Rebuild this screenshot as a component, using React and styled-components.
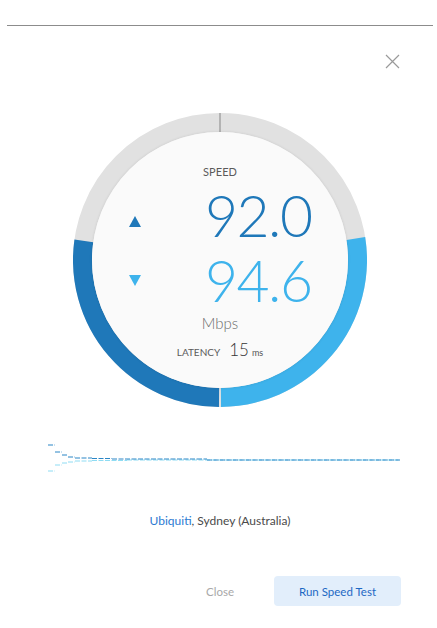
import React from 'react'
import styled, { createGlobalStyle } from 'styled-components'

const GlobalStyle = createGlobalStyle`
  html, body { margin: 0; padding: 0; background: #fff; }
  body { font-family: Lato, "Open Sans", sans-serif; }
`

const Modal = styled.div`
  margin: 25px 0 0 7px;
  width: 426px;
  border-top: 1px solid #8c8c8c;
  display: flex;
  flex-direction: column;
`

const Header = styled.div`
  display: flex;
  justify-content: flex-end;
  padding: 28px 33px 0 0;
`

const CloseIcon = styled.button`
  width: 15px;
  height: 15px;
  padding: 0;
  border: 0;
  background: none;
  cursor: pointer;
  display: block;
`

const Gauge = styled.div`
  position: relative;
  width: 294px;
  height: 294px;
  margin: 44px auto 0;
`

const Ring = styled.svg`
  position: absolute;
  inset: 0;
`

const Inner = styled.div`
  position: absolute;
  inset: 19px;
  border-radius: 50%;
  background: #fafafa;
  box-shadow: 0 0 3px rgba(0, 0, 0, 0.12);
  display: flex;
  flex-direction: column;
  align-items: stretch;
  padding-top: 33px;
  box-sizing: border-box;
`

const Label = styled.div`
  text-align: center;
  font-size: 11px;
  line-height: 14px;
  color: #5a5a5a;
  letter-spacing: 0.1px;
`

const SpeedRow = styled.div`
  display: flex;
  align-items: center;
  margin-top: ${p => p.$gap}px;
  height: 58px;
`

const Arrow = styled.span`
  margin-left: 37px;
  width: 0;
  height: 0;
  border-left: 6px solid transparent;
  border-right: 6px solid transparent;
  ${p => p.$up
    ? `border-bottom: 11px solid ${p.$color}; margin-top: 12px;`
    : `border-top: 11px solid ${p.$color}; margin-top: 0px;`}
`

const Value = styled.span`
  margin-left: 64px;
  font-weight: 300;
  font-size: 57px;
  line-height: 58px;
  color: ${p => p.$color};
  letter-spacing: -1.5px;
`

const Unit = styled.div`
  text-align: center;
  font-size: 15px;
  line-height: 18px;
  margin-top: 5px;
  color: #6a6a6a;
  font-weight: 300;
`

const Latency = styled.div`
  display: flex;
  justify-content: center;
  align-items: baseline;
  margin-top: 7px;
  color: #333;
`

const LatencyLabel = styled.span`
  font-size: 10px;
  color: #5a5a5a;
  margin-right: 9px;
`

const LatencyValue = styled.span`
  font-size: 17px;
  font-weight: 300;
`

const LatencyUnit = styled.span`
  font-size: 9px;
  margin-left: 3px;
  color: #555;
`

const Graph = styled.svg`
  display: block;
  margin-top: 25px;
`

const Location = styled.div`
  margin-top: 31px;
  text-align: center;
  font-size: 12px;
  line-height: 16px;
  color: #4a4a4a;
`

const Link = styled.a`
  color: #2c7ad2;
  text-decoration: none;
`

const Footer = styled.div`
  display: flex;
  justify-content: flex-end;
  align-items: center;
  gap: 19px;
  margin-top: 47px;
  padding-right: 32px;
`

const Button = styled.button`
  height: 30px;
  border: 0;
  border-radius: 4px;
  font-family: Lato, "Open Sans", sans-serif;
  font-size: 11.5px;
  cursor: pointer;
  background: ${p => (p.$primary ? '#e2eefb' : 'transparent')};
  color: ${p => (p.$primary ? '#1d68c4' : '#a8a8a8')};
  width: ${p => (p.$primary ? '127px' : '70px')};
`

const DARK = '#1f78b9'
const LIGHT = '#3eb3ec'

function arc(cx, cy, r, a1, a2) {
  const rad = a => (a * Math.PI) / 180
  const x1 = cx + r * Math.cos(rad(a1))
  const y1 = cy + r * Math.sin(rad(a1))
  const x2 = cx + r * Math.cos(rad(a2))
  const y2 = cy + r * Math.sin(rad(a2))
  const large = a2 - a1 > 180 ? 1 : 0
  return `M${x1} ${y1} A${r} ${r} 0 ${large} 1 ${x2} ${y2}`
}

// graph points, x relative to modal left, y relative to graph top
const upload = [
  [41, 13], [48, 20], [55, 23], [61, 25], [68, 26], [85, 26.5], [105, 27], [190, 27], [200, 28], [393, 28],
]
const download = [
  [41, 39], [48, 33], [55, 31], [61, 30], [68, 29], [85, 28.5], [120, 28], [393, 28],
]

function steps(pts) {
  let d = ''
  pts.forEach(([x, y], i) => {
    if (i === 0) d += `M${x} ${y}`
    else d += ` H${x} M${x} ${y}`
  })
  return d
}

function App() {
  const c = 147
  const r = 137.5
  return (
    <>
      <GlobalStyle />
      <Modal>
        <Header>
          <CloseIcon aria-label="close">
            <svg width="15" height="15" viewBox="0 0 15 15">
              <path d="M1 1 L14 14 M14 1 L1 14" stroke="#9a9a9a" strokeWidth="1.2" fill="none" />
            </svg>
          </CloseIcon>
        </Header>

        <Gauge>
          <Ring width="294" height="294" viewBox="0 0 294 294">
            <circle cx={c} cy={c} r={r} fill="none" stroke="#e1e1e1" strokeWidth="19" />
            <path d={arc(c, c, r, 90.4, 188)} fill="none" stroke={DARK} strokeWidth="19" />
            <path d={arc(c, c, r, -9, 89.6)} fill="none" stroke={LIGHT} strokeWidth="19" />
            <line x1={c} y1="0" x2={c} y2="19" stroke="#a3a3a3" strokeWidth="1.5" />
          </Ring>
          <Inner>
            <Label>SPEED</Label>
            <SpeedRow $gap={7}>
              <Arrow $up $color={DARK} />
              <Value $color={DARK}>92.0</Value>
            </SpeedRow>
            <SpeedRow $gap={7}>
              <Arrow $color={LIGHT} />
              <Value $color={LIGHT}>94.6</Value>
            </SpeedRow>
            <Unit>Mbps</Unit>
            <Latency>
              <LatencyLabel>LATENCY</LatencyLabel>
              <LatencyValue>15</LatencyValue>
              <LatencyUnit>ms</LatencyUnit>
            </Latency>
          </Inner>
        </Gauge>

        <Graph width="426" height="50" viewBox="0 0 426 50">
          <path d={steps(download)} fill="none" stroke="#8fdcf3" strokeWidth="1" strokeDasharray="5 1.5" />
          <path d={steps(upload)} fill="none" stroke="#2a86c6" strokeWidth="1" strokeDasharray="5 1.5" />
        </Graph>

        <Location>
          <Link href="#">Ubiquiti</Link>, Sydney (Australia)
        </Location>

        <Footer>
          <Button>Close</Button>
          <Button $primary>Run Speed Test</Button>
        </Footer>
      </Modal>
    </>
  )
}

export default App
